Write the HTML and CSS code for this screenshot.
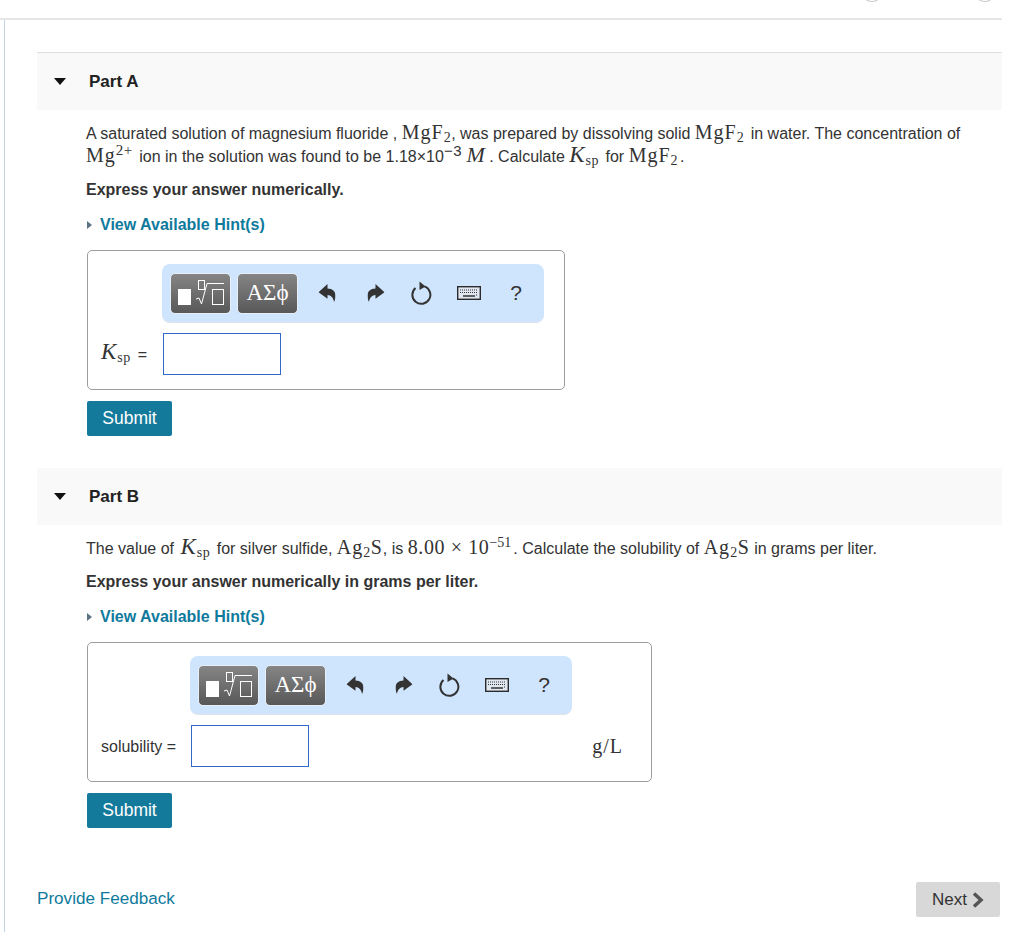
FILE: index.html
```html
<!DOCTYPE html>
<html lang="en">
<head>
<meta charset="utf-8">
<title>Part A and Part B</title>
<link rel="stylesheet" href="styles.css">
</head>
<body>
<div class="topbar"><span class="arc arc-one"></span><span class="arc arc-two"></span></div>
<main class="main">
  <section class="part">
    <h2 class="part-head"><span class="caret"></span>Part A</h2>
    <div class="part-body">
      <p class="prompt">A saturated solution of magnesium fluoride , <span class="m flush">MgF<sub>2</sub></span>, was prepared by dissolving solid <span class="m">MgF<sub>2</sub></span> in water. The concentration of<br><span class="m">Mg<sup>2+</sup></span> ion in the solution was found to be 1.18×10<sup class="tsup">−3</sup> <span class="m flush"><i class="mi">M</i></span> . Calculate <span class="m"><i class="k">K</i><sub>sp</sub></span> for <span class="m">MgF<sub>2</sub></span>.</p>
      <p class="express">Express your answer numerically.</p>
      <a class="hint" href="#"><span class="hint-caret"></span>View Available Hint(s)</a>
      <div class="answer answer-a">
        <div class="label-col"><span class="m lab"><i class="k">K</i><sub>sp</sub></span> =</div>
        <div class="answer-col">
          <div class="toolbar">
            <button class="tb-btn" type="button" aria-label="templates"><svg width="61" height="41" viewBox="0 0 61 41"><rect x="8" y="16" width="13" height="16" fill="#fff"/><g fill="none" stroke="#fff" stroke-width="1"><rect x="28.500" y="7.500" width="6" height="9"/><path d="M26 26l3-1 2.500 6L37 10.500h17"/><rect x="42.500" y="16.500" width="11" height="15"/></g></svg></button>
            <button class="tb-btn tb-greek" type="button">ΑΣϕ</button>
            <span class="tool t-undo"><svg width="17" height="18" viewBox="0 0 17 18"><path fill="#333" d="M0 8.300L9 0v4.500c5 0 8 3 8 7 0 2.500-.5 4.500-1.500 6.500-.5-4-3-7-6.500-7v3.800z"/></svg></span>
            <span class="tool t-redo"><svg width="17" height="18" viewBox="0 0 17 18"><path fill="#333" d="M17 8.300L8 0v4.500c-5 0-8 3-8 7 0 2.500.5 4.500 1.500 6.500.5-4 3-7 6.500-7v3.800z"/></svg></span>
            <span class="tool t-reset"><svg width="22" height="24" viewBox="0 0 22 24"><path fill="none" stroke="#333" stroke-width="2" d="M13.500 5.400A9 9 0 1 1 4.500 7"/><path fill="#333" d="M8.500 .5l6 5-6 3.500z"/></svg></span>
            <span class="tool t-keys"><svg width="24" height="14" viewBox="0 0 24 14"><rect x=".7" y=".7" width="22.600" height="12.600" fill="#dfe7f0" stroke="#2b2b2b" stroke-width="1.400"/><path stroke="#333" stroke-dasharray="1 1" d="M3 4h18M3 6.500h18M19 9h2"/><path stroke="#333" stroke-width="1.500" d="M6 10h12"/></svg></span>
            <span class="tool t-help">?</span>
          </div>
          <div class="input-row"><span class="input"></span></div>
        </div>
      </div>
      <button class="submit" type="button">Submit</button>
    </div>
  </section>
  <section class="part part-b">
    <h2 class="part-head"><span class="caret"></span>Part B</h2>
    <div class="part-body">
      <p class="prompt">The value of <span class="m"><i class="k">K</i><sub>sp</sub></span> for silver sulfide, <span class="m flush">Ag<sub>2</sub>S</span>, is <span class="m pow">8.00 × 10<sup>−51</sup></span>. Calculate the solubility of <span class="m flush">Ag<sub>2</sub>S</span> in grams per liter.</p>
      <p class="express">Express your answer numerically in grams per liter.</p>
      <a class="hint" href="#"><span class="hint-caret"></span>View Available Hint(s)</a>
      <div class="answer answer-b">
        <div class="label-col">solubility =</div>
        <div class="answer-col">
          <div class="toolbar">
            <button class="tb-btn" type="button" aria-label="templates"><svg width="61" height="41" viewBox="0 0 61 41"><rect x="8" y="16" width="13" height="16" fill="#fff"/><g fill="none" stroke="#fff" stroke-width="1"><rect x="28.500" y="7.500" width="6" height="9"/><path d="M26 26l3-1 2.500 6L37 10.500h17"/><rect x="42.500" y="16.500" width="11" height="15"/></g></svg></button>
            <button class="tb-btn tb-greek" type="button">ΑΣϕ</button>
            <span class="tool t-undo"><svg width="17" height="18" viewBox="0 0 17 18"><path fill="#333" d="M0 8.300L9 0v4.500c5 0 8 3 8 7 0 2.500-.5 4.500-1.500 6.500-.5-4-3-7-6.500-7v3.800z"/></svg></span>
            <span class="tool t-redo"><svg width="17" height="18" viewBox="0 0 17 18"><path fill="#333" d="M17 8.300L8 0v4.500c-5 0-8 3-8 7 0 2.500.5 4.500 1.500 6.500.5-4 3-7 6.500-7v3.800z"/></svg></span>
            <span class="tool t-reset"><svg width="22" height="24" viewBox="0 0 22 24"><path fill="none" stroke="#333" stroke-width="2" d="M13.500 5.400A9 9 0 1 1 4.500 7"/><path fill="#333" d="M8.500 .5l6 5-6 3.500z"/></svg></span>
            <span class="tool t-keys"><svg width="24" height="14" viewBox="0 0 24 14"><rect x=".7" y=".7" width="22.600" height="12.600" fill="#dfe7f0" stroke="#2b2b2b" stroke-width="1.400"/><path stroke="#333" stroke-dasharray="1 1" d="M3 4h18M3 6.500h18M19 9h2"/><path stroke="#333" stroke-width="1.500" d="M6 10h12"/></svg></span>
            <span class="tool t-help">?</span>
          </div>
          <div class="input-row"><span class="input"></span><span class="unit">g/L</span></div>
        </div>
      </div>
      <button class="submit" type="button">Submit</button>
    </div>
  </section>
  <footer class="foot">
    <a class="feedback" href="#">Provide Feedback</a>
    <button class="next" type="button">Next<svg width="12" height="16" viewBox="0 0 12 16"><path fill="none" stroke="#555" stroke-width="3.500" d="M2 1.500L9 8l-7 6.500"/></svg></button>
  </footer>
</main>
</body>
</html>
```
FILE: styles.css
```css
* { box-sizing: border-box; }
html, body { margin: 0; padding: 0; }
body {
  width: 1024px;
  height: 932px;
  overflow: hidden;
  background: #fff;
  color: #333;
  font-family: "Liberation Sans", Arial, sans-serif;
  font-size: 16px;
}
.topbar {
  position: relative;
  width: 1002px;
  height: 20px;
  border-bottom: 2px solid #e6e6e6;
  overflow: hidden;
}
.arc {
  position: absolute;
  top: -26px;
  width: 24px;
  height: 28px;
  border: 1px solid #c4c4c4;
  border-radius: 50%;
}
.arc-one { left: 860px; }
.arc-two { left: 973px; }
.main {
  width: 998px;
  height: 912px;
  margin-left: 4px;
  padding: 32px 0 0 32px;
  border-left: 1px solid #c3d2e2;
}
.part-b { margin-top: 32px; }
.part-head {
  display: flex;
  align-items: center;
  height: 58px;
  margin: 0;
  padding-left: 52px;
  position: relative;
  background: #f9f9f9;
  border-top: 1px solid #dedede;
  font-size: 17px;
  font-weight: 700;
  color: #222;
}
.part-b .part-head { height: 57px; border-top: 0; }
.caret {
  position: absolute;
  left: 17px;
  top: 25px;
  border-left: 6.500px solid transparent;
  border-right: 6.500px solid transparent;
  border-top: 7px solid #111;
}
.part-body { padding-left: 49px; }
.prompt {
  margin: 0;
  padding-top: 12px;
  line-height: 23px;
}
.m {
  font-family: "Liberation Serif", serif;
  font-size: 20px;
  letter-spacing: 1px;
  line-height: 0;
  color: #333;
  margin-right: 2px;
}
.flush { margin-right: 0; }
.pow { letter-spacing: 0.6px; }
.k { font-size: 23px; letter-spacing: 0; margin-right: 1px; }
.part-b .k { margin-left: 2px; }
.mi { font-size: 22px; letter-spacing: 0; }
.m sub, .m sup, .tsup { line-height: 0; font-size: 14px; letter-spacing: 0.5px; }
.m sub { vertical-align: -3px; }
.m sup { vertical-align: 7px; font-size: 15px; }
.m.pow sup { font-size: 14px; letter-spacing: 0; }
.tsup { vertical-align: 6px; font-size: 15px; }
.express {
  margin: 10px 0 0;
  line-height: 23px;
  font-size: 16px;
  font-weight: 700;
}
.hint {
  display: flex;
  align-items: center;
  margin-top: 12px;
  height: 23px;
  color: #0f7a9c;
  font-weight: 700;
  font-size: 16px;
  text-decoration: none;
}
.hint-caret {
  width: 0;
  margin-right: 8px;
  margin-left: 1px;
  border-top: 4.500px solid transparent;
  border-bottom: 4.500px solid transparent;
  border-left: 5px solid #5d7480;
}
.answer {
  display: flex;
  height: 140px;
  margin: 14px 0 0 1px;
  padding: 13px 0 0 13px;
  border: 1px solid #9d9d9d;
  border-radius: 5px;
}
.answer-a { width: 478px; }
.answer-b { width: 565px; }
.label-col {
  display: flex;
  align-items: center;
  align-self: flex-start;
  height: 42px;
  margin-top: 70px;
  font-size: 16px;
  white-space: nowrap;
}
.answer-a .label-col { width: 62px; }
.answer-b .label-col { width: 90px; }
.lab { margin-right: 7px; }
.answer-col { flex: 1; }
.toolbar {
  display: flex;
  align-items: center;
  position: relative;
  width: 382px;
  height: 59px;
  margin-left: -1px;
  padding-left: 8px;
  background: #cfe4fd;
  border-radius: 8px;
  border-bottom: 1px solid #dfe4ea;
}
.tb-btn {
  display: block;
  width: 61px;
  height: 41px;
  padding: 0;
  margin-right: 6px;
  border: 1px solid #e8eef6;
  border-radius: 5px;
  background: linear-gradient(#858585, #585858);
  color: #fff;
  font-family: "Liberation Serif", serif;
  font-size: 23px;
}
.tb-btn svg { display: block; margin: -1px; }
.tool {
  position: absolute;
  top: 50%;
  transform: translate(-50%, -50%);
  display: flex;
  color: #333;
}
.t-undo { left: 165px; }
.t-redo { left: 214px; }
.t-reset { left: 260px; }
.t-keys { left: 307px; }
.t-help { left: 354px; font-size: 21px; }
.input-row {
  display: flex;
  align-items: center;
  margin-top: 10px;
}
.answer-b .input-row { width: 432px; }
.input {
  display: block;
  width: 118px;
  height: 42px;
  border: 1.500px solid #3268c8;
  background: #fff;
}
.unit {
  margin-left: auto;
  font-family: "Liberation Serif", serif;
  font-size: 20px;
  letter-spacing: 1px;
}
.submit {
  display: block;
  width: 85px;
  height: 35px;
  margin: 11px 0 0 1px;
  padding: 0;
  border: 0;
  border-radius: 2px;
  background: #147a9c;
  color: #fff;
  font-family: "Liberation Sans", Arial, sans-serif;
  font-size: 17.500px;
}
.foot {
  display: flex;
  align-items: center;
  justify-content: space-between;
  margin-top: 54px;
  width: 963px;
}
.feedback {
  padding-bottom: 2px;
  color: #0f7a9c;
  font-size: 17.100px;
  text-decoration: none;
}
.next {
  display: flex;
  align-items: center;
  justify-content: center;
  gap: 5px;
  width: 84px;
  height: 35px;
  padding: 0;
  border: 0;
  border-radius: 2px;
  background: #d8d8d8;
  color: #333;
  font-family: "Liberation Sans", Arial, sans-serif;
  font-size: 17px;
}
```
